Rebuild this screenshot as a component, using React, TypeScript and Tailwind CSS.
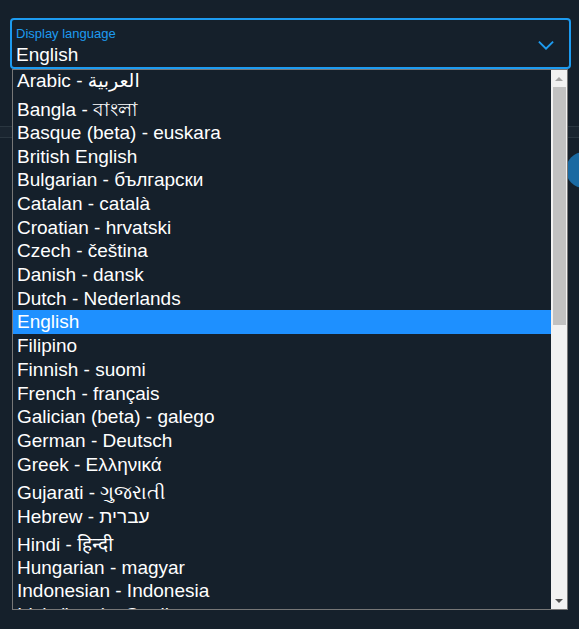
import React from 'react'

type Lang = { label: string; h?: number; pt?: number; selected?: boolean }

const languages: Lang[] = [
  { label: 'Arabic - العربية' },
  { label: 'Bangla - বাংলা', h: 28.3, pt: 5.6 },
  { label: 'Basque (beta) - euskara' },
  { label: 'British English' },
  { label: 'Bulgarian - български' },
  { label: 'Catalan - català' },
  { label: 'Croatian - hrvatski' },
  { label: 'Czech - čeština' },
  { label: 'Danish - dansk' },
  { label: 'Dutch - Nederlands' },
  { label: 'English', selected: true },
  { label: 'Filipino' },
  { label: 'Finnish - suomi' },
  { label: 'French - français' },
  { label: 'Galician (beta) - galego' },
  { label: 'German - Deutsch' },
  { label: 'Greek - Ελληνικά' },
  { label: 'Gujarati - ગુજરાતી', h: 28.3, pt: 4.6 },
  { label: 'Hebrew - עברית' },
  { label: 'Hindi - हिन्दी', h: 27.3, pt: 4.6 },
  { label: 'Hungarian - magyar' },
  { label: 'Indonesian - Indonesia' },
  { label: 'Irish (beta) - Gaeilge' },
]

function ChevronDown() {
  return (
    <svg viewBox="0 0 24 24" className="w-[22px] h-[22px] fill-[#1d9bf0]">
      <path d="M3.543 8.96l1.414-1.42L12 14.59l7.043-7.05 1.414 1.42L12 17.41 3.543 8.96z" />
    </svg>
  )
}

function Scrollbar() {
  return (
    <div className="w-[16px] h-full bg-[#f1f1f1] flex flex-col items-start">
      {/* up arrow */}
      <div className="w-full h-[17px] flex items-center justify-center">
        <div className="w-0 h-0 border-x-[4px] border-x-transparent border-b-[4px] border-b-[#a3a3a3]" />
      </div>
      <div className="ml-[2px] w-[13px] h-[238px] bg-[#c1c1c1]" />
      <div className="flex-1" />
      {/* down arrow */}
      <div className="w-full h-[17px] flex items-center justify-center">
        <div className="w-0 h-0 border-x-[4px] border-x-transparent border-t-[4px] border-t-[#505050]" />
      </div>
    </div>
  )
}

export default function App() {
  return (
    <div
      className="relative w-[579px] h-[629px] overflow-hidden bg-[#15202b]"
      style={{ fontFamily: '"Liberation Sans", "DejaVu Sans", "Noto Sans", sans-serif' }}
    >
      {/* Select field */}
      <div className="pt-[18px] pl-[10px] pr-[8px]">
        <div className="relative h-[51px] border-2 border-[#1d9bf0] rounded-[4px] px-[4px]">
          <div className="pt-[6px] text-[13px] leading-[16px] text-[#1d9bf0]">Display language</div>
          <div className="mt-[1px] text-[19px] leading-[24px] text-white">English</div>
          <div className="absolute left-[523px] top-[14px]">
            <ChevronDown />
          </div>
        </div>
      </div>

      {/* Page content under the popup */}
      <div className="mt-[57px] h-[12px] bg-[#1a2530] border-y border-[#2a3640]" />
      <div className="mt-[13.5px] flex justify-end">
        <div className="w-[36px] h-[36px] rounded-full bg-[#1b6aa2] -mr-[23px] shrink-0" />
      </div>

      {/* Open dropdown list */}
      <div className="absolute left-[12px] top-[69px] w-[556px] h-[541px] border border-[#777777] bg-[#15202b] flex">
        <div className="flex-1 overflow-hidden">
          <div className="-mt-[1px]">
            {languages.map((lang) => (
              <div
                key={lang.label}
                className={`pl-[4px] text-[19px] leading-[23.7px] whitespace-nowrap ${
                  lang.selected ? 'bg-[#1e90ff] text-white' : 'text-white'
                }`}
                style={{ height: lang.h ?? 23.7, paddingTop: lang.pt ?? 0 }}
              >
                {lang.label}
              </div>
            ))}
          </div>
        </div>
        <Scrollbar />
      </div>
    </div>
  )
}
